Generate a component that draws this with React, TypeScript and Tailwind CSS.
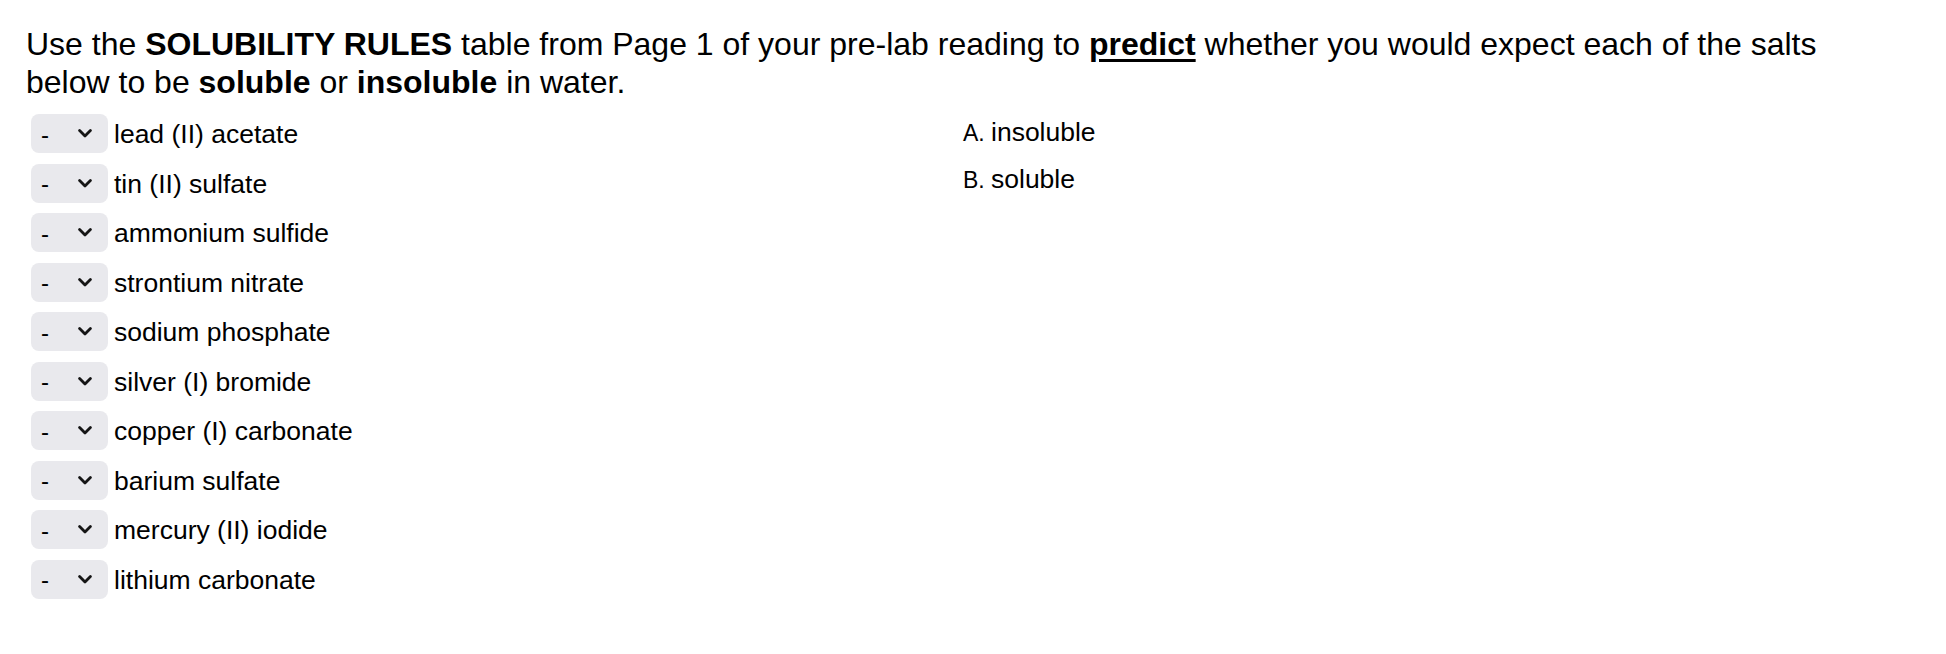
import { useState } from 'react';

const salts = [
  'lead (II) acetate',
  'tin (II) sulfate',
  'ammonium sulfide',
  'strontium nitrate',
  'sodium phosphate',
  'silver (I) bromide',
  'copper (I) carbonate',
  'barium sulfate',
  'mercury (II) iodide',
  'lithium carbonate',
];

const choices = [
  { letter: 'A.', label: 'insoluble' },
  { letter: 'B.', label: 'soluble' },
];

const Chevron = () => (
  <svg width="14" height="9" viewBox="0 0 14 9" className="block">
    <polyline points="1.6,1.6 7,7 12.4,1.6" fill="none" stroke="#151515" strokeWidth="2.8" strokeLinecap="round" strokeLinejoin="round" />
  </svg>
);

const SaltRow = ({ name }: { name: string }) => {
  const [value, setValue] = useState('-');
  return (
    <div className="flex items-center h-[39px]">
      <label className="relative flex items-center w-[77px] h-[39px] rounded-[8px] bg-[#e9e9ed] pl-[10px] pr-[16px]">
        <span className="flex-1 text-[24px] leading-none pt-[2px]">{value}</span>
        <Chevron />
        <select
          value={value}
          onChange={(e) => setValue(e.target.value)}
          className="absolute inset-0 opacity-0 cursor-pointer"
        >
          <option value="-">-</option>
          <option value="A">A</option>
          <option value="B">B</option>
        </select>
      </label>
      <span className="ml-[6px] text-[26.5px] leading-none pt-[2px]">{name}</span>
    </div>
  );
};

export default function App() {
  return (
    <div className="bg-white text-black min-h-[654px] pl-[26px] pt-[25px] font-['Liberation_Sans',Arial,sans-serif]">
      <p className="text-[32px] leading-[38px] max-w-[1840px]">
        Use the <b>SOLUBILITY RULES</b> table from Page 1 of your pre-lab reading to{' '}
        <b className="underline underline-offset-[4px] decoration-[3px]">predict</b> whether you would expect each of the salts
        below to be <b>soluble</b> or <b>insoluble</b> in water.
      </p>

      <div className="flex mt-[13px]">
        <div className="w-[937px] pl-[5px] flex flex-col gap-[10.5px]">
          {salts.map((s) => (
            <SaltRow key={s} name={s} />
          ))}
        </div>

        <div className="flex flex-col gap-[19.5px] pt-[5px]">
          {choices.map((c) => (
            <div key={c.letter} className="flex items-baseline h-[27px]">
              <span className="text-[23px] leading-none w-[28px]">{c.letter}</span>
              <span className="text-[26.5px] leading-none">{c.label}</span>
            </div>
          ))}
        </div>
      </div>
    </div>
  );
}
